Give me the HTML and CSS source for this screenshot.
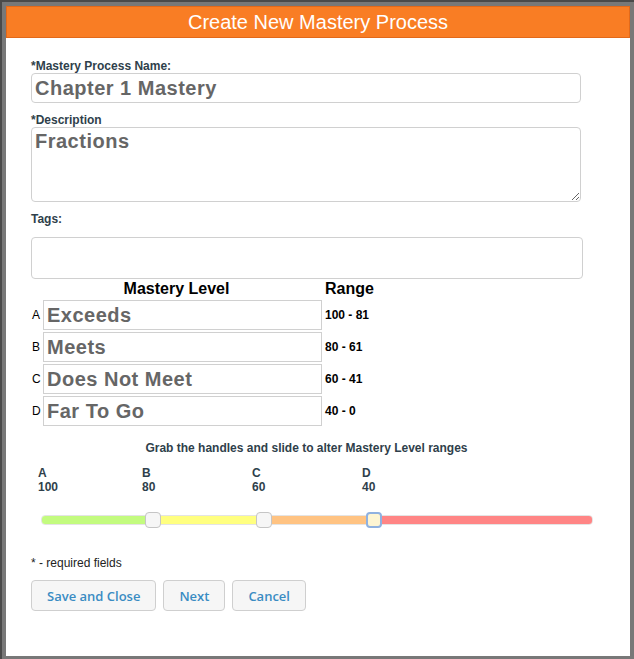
FILE: index.html
```html
<!DOCTYPE html>
<html>
<head>
<meta charset="utf-8">
<title>Create New Mastery Process</title>
<link rel="stylesheet" href="styles.css">
</head>
<body>
<div class="dialog">
  <div class="titlebar">Create New Mastery Process</div>
  <div class="content">
    <label class="lbl lbl-name">*Mastery Process Name:</label>
    <input class="field name-input" type="text" value="Chapter 1 Mastery">
    <label class="lbl lbl-desc">*Description</label>
    <textarea class="field desc-input">Fractions</textarea>
    <label class="lbl lbl-tags">Tags:</label>
    <div class="field tags-input"></div>

    <div class="levels">
      <div class="lv-head lv-head-name">Mastery Level</div>
      <div class="lv-head lv-head-range">Range</div>

      <div class="lv-letter">A</div>
      <div class="lv-box">Exceeds</div>
      <div class="lv-range">100 - 81</div>

      <div class="lv-letter">B</div>
      <div class="lv-box">Meets</div>
      <div class="lv-range">80 - 61</div>

      <div class="lv-letter">C</div>
      <div class="lv-box">Does Not Meet</div>
      <div class="lv-range">60 - 41</div>

      <div class="lv-letter">D</div>
      <div class="lv-box">Far To Go</div>
      <div class="lv-range">40 - 0</div>
    </div>

    <div class="hint">Grab the handles and slide to alter Mastery Level ranges</div>

    <div class="marks">
      <div class="mark mark-first"><span>A</span><span>100</span></div>
      <div class="mark"><span>B</span><span>80</span></div>
      <div class="mark"><span>C</span><span>60</span></div>
      <div class="mark"><span>D</span><span>40</span></div>
    </div>

    <div class="slider">
      <div class="track">
        <div class="seg seg-a"></div>
        <div class="seg seg-b"></div>
        <div class="seg seg-c"></div>
        <div class="seg seg-d"></div>
      </div>
      <div class="handle handle-b"></div>
      <div class="handle handle-c"></div>
      <div class="handle handle-d active"></div>
    </div>

    <div class="required">* - required fields</div>

    <div class="buttons">
      <button class="btn">Save and Close</button>
      <button class="btn">Next</button>
      <button class="btn">Cancel</button>
    </div>
  </div>
</div>
</body>
</html>
```
FILE: styles.css
```css
html, body {
  margin: 0;
  padding: 0;
  overflow: hidden;
  background: #4a4a4a;
  font-family: "Liberation Sans", Arial, sans-serif;
}

.dialog {
  margin: 2px 0 0 2px;
  width: 624px;
  height: 650px;
  border: 4px solid #787878;
  background: #ffffff;
}

.titlebar {
  box-sizing: border-box;
  height: 32px;
  line-height: 30px;
  background: #f97d24;
  border: 1px solid #e2691a;
  color: #ffffff;
  font-size: 20px;
  text-align: center;
}

.content {
  width: 551px;
  padding: 21px 0 0 25px;
}

.lbl {
  display: block;
  font-size: 12px;
  font-weight: bold;
  line-height: 14px;
  color: #2f3f4b;
}

.lbl-desc { margin-top: 10px; }
.lbl-tags { margin-top: 10px; }

.field {
  display: block;
  box-sizing: border-box;
  border: 1px solid #d0d0d0;
  border-radius: 4px;
  background: #ffffff;
  font-family: "Liberation Sans", Arial, sans-serif;
  font-size: 20px;
  font-weight: bold;
  letter-spacing: 0.5px;
  color: #666666;
  outline: none;
  margin: 0;
}

.name-input {
  width: 550px;
  height: 30px;
  padding: 0 3px;
}

.desc-input {
  width: 550px;
  height: 75px;
  padding: 2px 3px;
  resize: vertical;
}

.tags-input {
  width: 552px;
  height: 42px;
  margin-top: 11px;
}

.levels {
  display: grid;
  grid-template-columns: 12px 279px auto;
  row-gap: 2px;
  align-items: center;
}

.lv-head {
  height: 19px;
  line-height: 19px;
  font-size: 16px;
  font-weight: bold;
  color: #000000;
}

.lv-head-name {
  grid-column: 1 / 3;
  text-align: center;
}

.lv-head-range {
  padding-left: 3px;
}

.lv-letter {
  font-size: 12px;
  color: #000000;
  padding-left: 1px;
}

.lv-box {
  box-sizing: border-box;
  height: 30px;
  line-height: 28px;
  border: 1px solid #d0d0d0;
  padding-left: 3px;
  font-size: 20px;
  font-weight: bold;
  letter-spacing: 0.5px;
  color: #666666;
}

.lv-range {
  padding-left: 3px;
  font-size: 12px;
  font-weight: bold;
  color: #000000;
}

.hint {
  margin-top: 15px;
  text-align: center;
  font-size: 12px;
  font-weight: bold;
  line-height: 14px;
  color: #2f3f4b;
}

.marks {
  display: flex;
  margin-top: 11px;
  padding-left: 7px;
}

.mark {
  display: flex;
  flex-direction: column;
  width: 110px;
  font-size: 12px;
  font-weight: bold;
  line-height: 14px;
  color: #2f3f4b;
}

.mark-first { width: 104px; }

.slider {
  position: relative;
  margin: 21px 0 0 10px;
  width: 552px;
  height: 10px;
}

.track {
  display: flex;
  box-sizing: border-box;
  height: 10px;
  border: 1px solid #e4e4e4;
  border-radius: 4px;
  overflow: hidden;
}

.seg { height: 100%; }
.seg-a { width: 20%; background: #c3fb7f; }
.seg-b { width: 20%; background: #ffff80; }
.seg-c { width: 20%; background: #ffc382; }
.seg-d { width: 40%; background: #ff8585; }

.handle {
  position: absolute;
  top: -3px;
  box-sizing: border-box;
  width: 16px;
  height: 16px;
  margin-left: -6px;
  background: #f6f6f6;
  border: 1px solid #c5c5c5;
  border-radius: 4px;
}

.handle-b { left: 20%; }
.handle-c { left: 40%; }
.handle-d { left: 60%; }

.handle.active {
  background: #fdf5d3;
  border: 2px solid #8fb1e0;
}

.required {
  margin-top: 31px;
  font-size: 12px;
  line-height: 14px;
  color: #222222;
}

.buttons {
  display: flex;
  gap: 7px;
  margin-top: 10px;
}

.btn {
  box-sizing: border-box;
  height: 31px;
  padding: 0 15px;
  background: #f6f6f6;
  border: 1px solid #cfcfcf;
  border-radius: 4px;
  font-family: "Open Sans", sans-serif;
  font-size: 13px;
  font-weight: 600;
  color: #3a8cc3;
  cursor: pointer;
}
```
